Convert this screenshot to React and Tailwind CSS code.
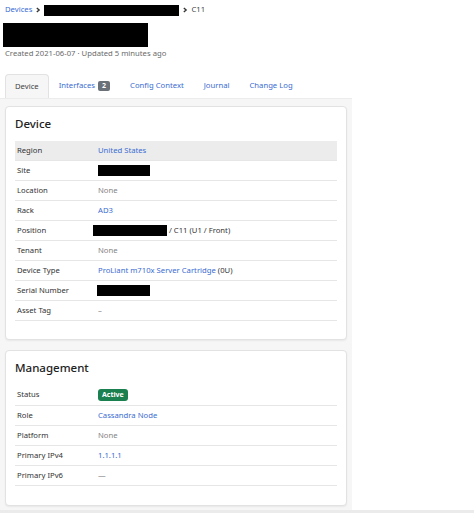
import React from "react";

const font = { fontFamily: '"Noto Sans", "Open Sans", sans-serif' };

function Chevron() {
  return (
    <svg width="6" height="6" viewBox="0 0 10 10" className="mx-[3px]">
      <path d="M3 1.5 L7 5 L3 8.5" fill="none" stroke="#333" strokeWidth="2.2" />
    </svg>
  );
}

function Row({ label, children, shaded }) {
  return (
    <div
      className={`flex items-center h-[20px] border-b border-[#e6e6e6] ${
        shaded ? "bg-[#ececec]" : ""
      }`}
    >
      <div className="w-[83px] pl-[2px] text-[#333]">{label}</div>
      <div className="flex items-center">{children}</div>
    </div>
  );
}

const Link = ({ children }) => <span className="text-[#3a6cd2]">{children}</span>;
const Muted = ({ children }) => <span className="text-[#848484]">{children}</span>;
const Redacted = ({ w, className = "" }) => (
  <span className={`inline-block h-[11px] bg-black ${className}`} style={{ width: w }} />
);

function Card({ title, children }) {
  return (
    <div className="bg-white border border-[#e2e2e2] rounded-[4px] shadow-[0_1px_2px_rgba(0,0,0,0.06)] px-[9px]">
      <div className="h-[34px] flex items-center text-[11.5px] font-medium text-[#222]">
        {title}
      </div>
      {children}
    </div>
  );
}

export default function App() {
  const tabs = [
    { name: "Device", active: true },
    { name: "Interfaces", badge: "2" },
    { name: "Config Context" },
    { name: "Journal" },
    { name: "Change Log" },
  ];
  return (
    <div className="w-[474px] h-[513px] bg-white overflow-hidden flex flex-col text-[7.7px]" style={font}>
      <div className="px-[5px] pt-[4px]">
        <div className="flex items-center h-[12px] text-[#444]">
          <Link>Devices</Link>
          <Chevron />
          <Redacted w={135} />
          <Chevron />
          <span>C11</span>
        </div>
        <div className="h-[24px] w-[145px] bg-black mt-[7px] -ml-[2px]" />
        <div className="mt-[1px] text-[#6a6a6a] h-[12px] flex items-center">
          Created 2021-06-07 · Updated 5 minutes ago
        </div>
      </div>

      <div className="flex mt-[14px] pl-[5px] h-[24px]">
        {tabs.map((t) => (
          <div
            key={t.name}
            className={`flex items-center px-[9px] rounded-t-[4px] ${
              t.active
                ? "bg-[#f6f6f6] border border-b-0 border-[#e2e2e2] text-[#444]"
                : "text-[#3a6cd2] border border-transparent"
            }`}
          >
            {t.name}
            {t.badge && (
              <span className="ml-[3px] bg-[#6b7178] text-white font-bold text-[7px] rounded-[2px] px-[4px] h-[10px] leading-[10px]">
                {t.badge}
              </span>
            )}
          </div>
        ))}
      </div>

      <div className="w-[352px] flex-1 bg-[#f6f6f6] border-t border-[#ececec] px-[5px] pt-[7px] flex flex-col gap-[10px]">
        <Card title="Device">
          <Row label="Region" shaded>
            <Link>United States</Link>
          </Row>
          <Row label="Site">
            <Redacted w={52} />
          </Row>
          <Row label="Location">
            <Muted>None</Muted>
          </Row>
          <Row label="Rack">
            <Link>AD3</Link>
          </Row>
          <Row label="Position">
            <Redacted w={74} className="-ml-[5px]" />
            <span className="ml-[2px] text-[#333]">/ C11 (U1 / Front)</span>
          </Row>
          <Row label="Tenant">
            <Muted>None</Muted>
          </Row>
          <Row label="Device Type">
            <Link>ProLiant m710x Server Cartridge</Link>
            <span className="ml-[2px] text-[#333]">(0U)</span>
          </Row>
          <Row label="Serial Number">
            <Redacted w={53} className="-ml-[1px]" />
          </Row>
          <Row label="Asset Tag">
            <Muted>–</Muted>
          </Row>
          <div className="h-[18px]" />
        </Card>

        <Card title="Management">
          <div className="flex items-center h-[21px] border-b border-[#e6e6e6]">
            <div className="w-[83px] pl-[2px] text-[#333]">Status</div>
            <span className="bg-[#1b8050] text-white font-bold text-[7px] rounded-[3px] px-[4px] h-[12px] leading-[12px]">
              Active
            </span>
          </div>
          <Row label="Role">
            <Link>Cassandra Node</Link>
          </Row>
          <Row label="Platform">
            <Muted>None</Muted>
          </Row>
          <Row label="Primary IPv4">
            <Link>1.1.1.1</Link>
          </Row>
          <Row label="Primary IPv6">
            <Muted>—</Muted>
          </Row>
          <div className="h-[19px]" />
        </Card>
      </div>
      <div className="h-[3px] w-full bg-[#ebebeb]" />
    </div>
  );
}
